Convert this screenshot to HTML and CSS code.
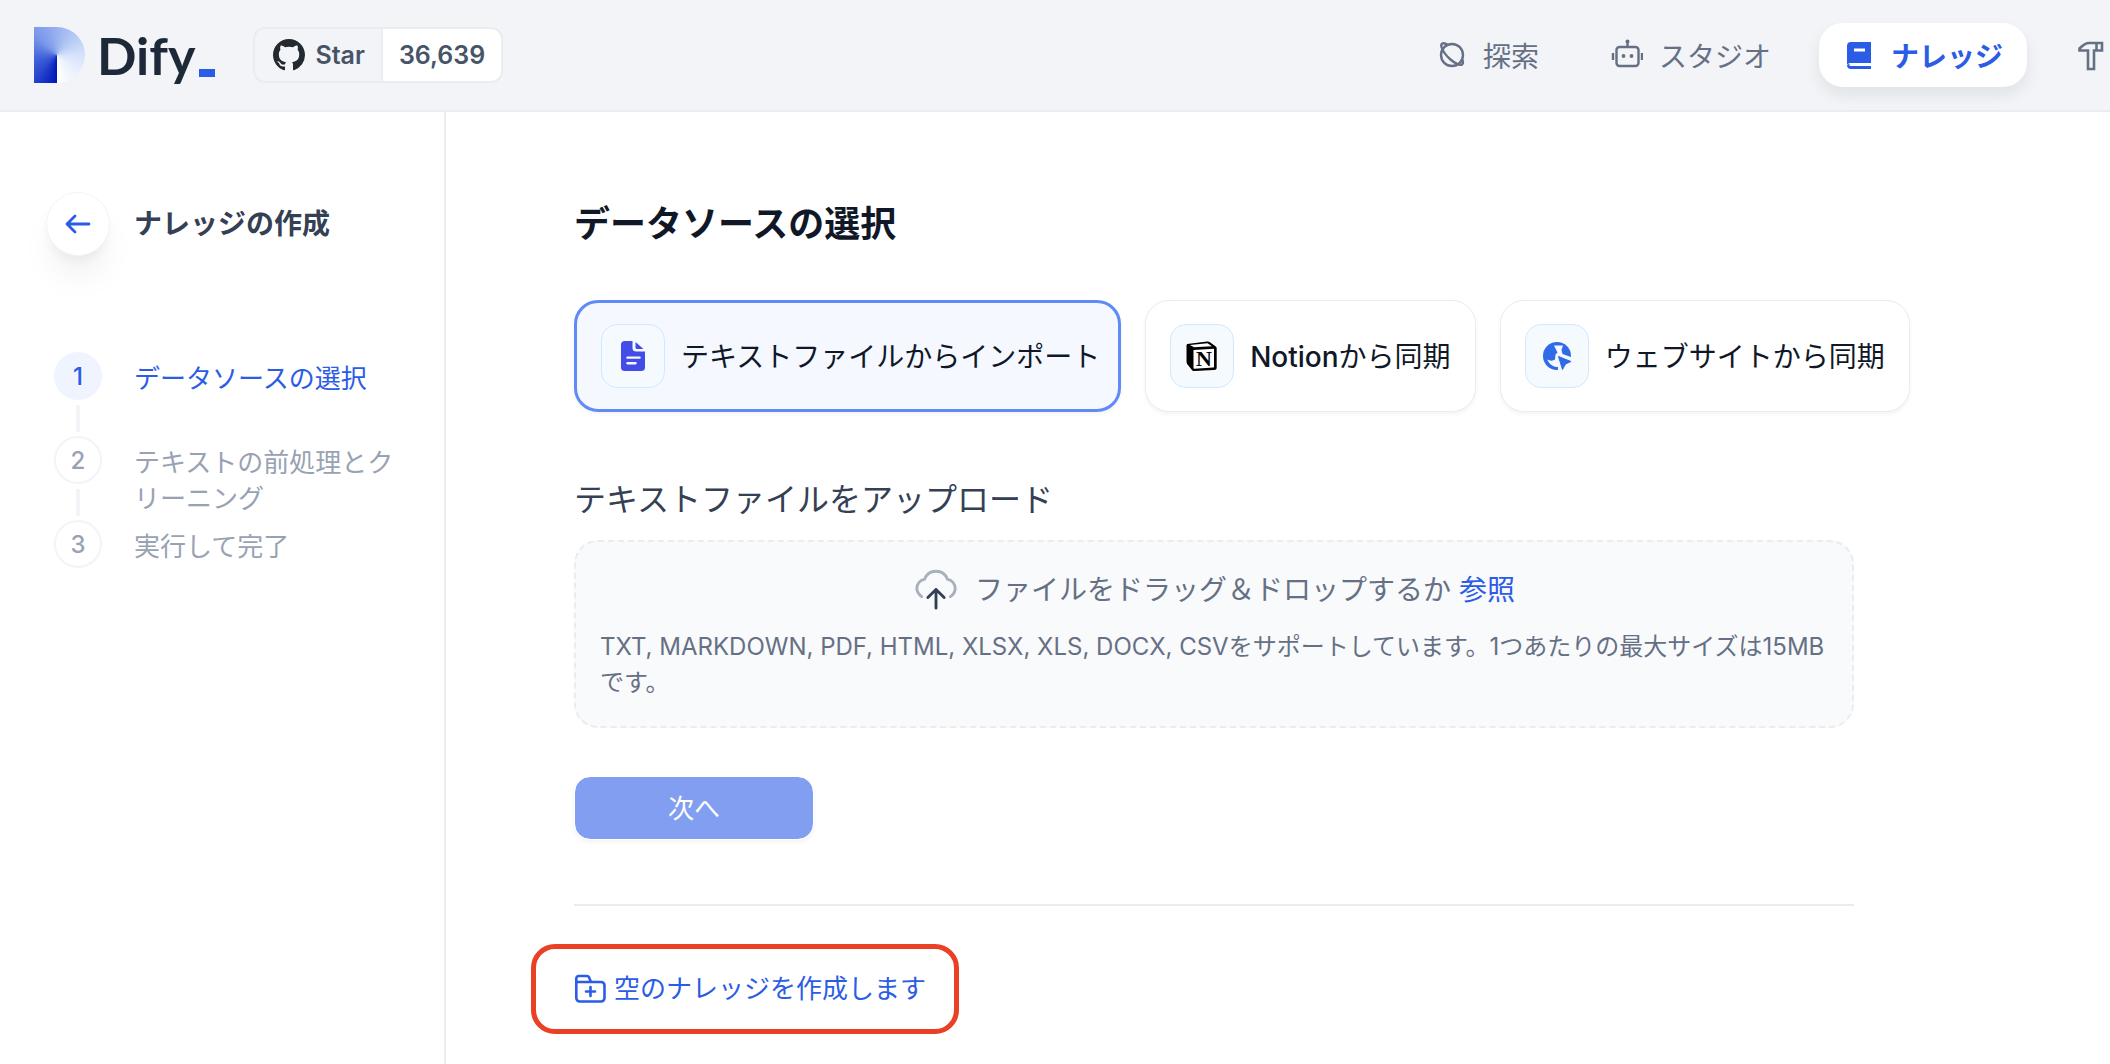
FILE: index.html
```html
<!DOCTYPE html>
<html lang="ja">
<head>
    <meta charset="UTF-8">
    <meta name="viewport" content="width=device-width, initial-scale=1.0">
    <title>ナレッジの作成 - Dify</title>
    <link rel="stylesheet" href="styles.css">
</head>
<body>
    <header class="header">
        <a class="logo" href="#">
            <span class="logo-mark"></span>
            <span class="logo-text">Dify</span>
            <span class="logo-bar"></span>
        </a>
        <a class="github" href="#">
            <span class="github-star">
                <svg width="32" height="32" viewBox="0 0 16 16" fill="#24292f"><path d="M8 0C3.58 0 0 3.58 0 8c0 3.54 2.29 6.53 5.47 7.59.4.07.55-.17.55-.38 0-.19-.01-.82-.01-1.49-2.01.37-2.53-.49-2.69-.94-.09-.23-.48-.94-.82-1.13-.28-.15-.68-.52-.01-.53.63-.01 1.08.58 1.23.82.72 1.21 1.87.87 2.33.66.07-.52.28-.87.51-1.07-1.78-.2-3.64-.89-3.64-3.95 0-.87.31-1.59.82-2.15-.08-.2-.36-1.02.08-2.12 0 0 .67-.21 2.2.82.64-.18 1.32-.27 2-.27s1.36.09 2 .27c1.53-1.04 2.2-.82 2.2-.82.44 1.1.16 1.92.08 2.12.51.56.82 1.27.82 2.15 0 3.07-1.87 3.75-3.65 3.95.29.25.54.73.54 1.48 0 1.07-.01 1.93-.01 2.2 0 .21.15.46.55.38A8.01 8.01 0 0 0 16 8c0-4.42-3.58-8-8-8z"/></svg>
                Star
            </span>
            <span class="github-count">36,639</span>
        </a>
        <nav class="nav">
            <a class="nav-item" href="#">
                <svg width="32" height="32" viewBox="0 0 32 32" fill="none" stroke="currentColor" stroke-width="2.4">
                    <circle cx="17" cy="16" r="11"/>
                    <path d="M13 6C8.5 3 5.5 4 6.500 8c1.300 4 5 9 9 12.500 4 3.500 9.500 6.500 11.500 5 1.500-1.200.8-4-.5-6"/>
                </svg>
                探索
            </a>
            <a class="nav-item" href="#">
                <svg width="32" height="32" viewBox="0 0 32 32" fill="none" stroke="currentColor" stroke-width="2.4">
                    <rect x="5.5" y="8" width="22" height="19" rx="3"/>
                    <path d="M16.5 8V2M2 14v7M31 14v7"/>
                    <circle cx="16.5" cy="2.5" r="2" fill="currentColor" stroke="none"/>
                    <circle cx="12.5" cy="17" r="1.9" fill="currentColor" stroke="none"/>
                    <circle cx="20.5" cy="17" r="1.9" fill="currentColor" stroke="none"/>
                </svg>
                スタジオ
            </a>
            <a class="nav-item active" href="#">
                <svg width="32" height="32" viewBox="0 0 32 32" fill="currentColor">
                    <path fill-rule="evenodd" d="M8 3h20v21H7.5C6.5 24 5.5 24.5 4 25.5V7a4 4 0 0 1 4-4zM11 9.500v3h11v-3z"/>
                    <path d="M4 26c.8-.8 1.800-1 3-1-1 .5-1 2 .5 2H28v3H8c-2.500 0-4-1.500-4-4z"/>
                </svg>
                ナレッジ
            </a>
            <a class="nav-item cut" href="#" aria-label="ツール">
                <svg width="32" height="32" viewBox="0 0 32 32" fill="none" stroke="currentColor" stroke-width="2.6">
                    <path d="M4.500 11.500V9.500C7 7 10 4 14 4h13v7.500h-8V30h-6V11.500zM21.500 4v7.500"/>
                </svg>
            </a>
        </nav>
    </header>

    <div class="page">
        <aside class="sidebar">
            <div class="sidebar-title">
                <button class="back" type="button" aria-label="戻る">
                    <svg width="28" height="28" viewBox="0 0 28 28" fill="none" stroke="currentColor" stroke-width="2.8" stroke-linecap="round" stroke-linejoin="round"><path d="M25 14H3M11 6l-8 8 8 8"/></svg>
                </button>
                <h2>ナレッジの作成</h2>
            </div>
            <ol class="steps">
                <li class="step current">
                    <div class="marker"><span class="number">1</span></div>
                    <span class="label">データソースの選択</span>
                </li>
                <li class="step">
                    <div class="marker"><span class="number">2</span></div>
                    <span class="label">テキストの前処理とクリーニング</span>
                </li>
                <li class="step">
                    <div class="marker"><span class="number">3</span></div>
                    <span class="label">実行して完了</span>
                </li>
            </ol>
        </aside>

        <main class="main">
            <h1>データソースの選択</h1>
            <div class="sources">
                <button class="source selected" type="button">
                    <span class="source-icon">
                        <svg width="32" height="32" viewBox="0 0 32 32" fill="#444ce7">
                            <path fill-rule="evenodd" d="M8 0h7.500v8a4 4 0 0 0 4 4H28v18a4 4 0 0 1-4 4H8a4 4 0 0 1-4-4V4a4 4 0 0 1 4-4zM10.500 17.700a1.300 1.300 0 0 0 0 2.600h12a1.300 1.300 0 0 0 0-2.600zM10.500 24a1.300 1.300 0 0 0 0 2.600h8a1.300 1.300 0 0 0 0-2.600z" transform="translate(0 1) scale(1 .88)"/>
                            <path d="M18.500 2 26.500 9h-6.500a1.500 1.500 0 0 1-1.500-1.500z"/>
                        </svg>
                    </span>
                    <span class="source-name">テキストファイルからインポート</span>
                </button>
                <button class="source" type="button">
                    <span class="source-icon">
                        <svg width="34" height="34" viewBox="0 0 34 34">
                            <path d="M1 4.500 23 1l10 6v25L8 33.500 1 26z" fill="#fff"/>
                            <path d="M2 5 22 2.500c1.500-.2 2 0 3 .7l5.500 4c1 .7 1.200 1 1.200 2.200V28.500c0 1.500-.6 2.300-2.200 2.400L9.500 32c-1.200.1-1.800-.1-2.600-1l-4-5C2 24.800 1.500 24 1.500 22.500V6.500z" fill="#000"/>
                            <path d="M5 6 22.500 4.300l4.500 2.900-18 1.100z" fill="#fff"/>
                            <path d="M8.500 11 29 9.800v17.700c0 .7-.3 1-1 1.100L9.500 29.700c-.7 0-1-.3-1-1z" fill="#fff"/>
                            <text class="notion-n" x="19" y="27" text-anchor="middle">N</text>
                        </svg>
                    </span>
                    <span class="source-name"><b>Notion</b>から同期</span>
                </button>
                <button class="source" type="button">
                    <span class="source-icon">
                        <svg width="32" height="32" viewBox="0 0 32 32">
                            <circle cx="16" cy="16" r="14" fill="#2f6be8"/>
                            <path d="M13 5.500h9l-1.500 4.500 1 4 8.500 3 1 4-3 9-10 1-2-2.500c-3 0-6-2-8-5l-2-4c3 1.500 6 1.500 8 0l.5-5 2-2z" fill="#f5f9ff"/>
                            <path d="M5.500 21c2.500 5 7 7.300 11.500 7.300" fill="none" stroke="#2f6be8" stroke-width="2.5"/>
                            <path d="m17.500 16.500 12.500 5-5.500 2.500-3 5.500z" fill="#2f6be8" stroke="#2f6be8" stroke-linejoin="round"/>
                        </svg>
                    </span>
                    <span class="source-name">ウェブサイトから同期</span>
                </button>
            </div>

            <h3>テキストファイルをアップロード</h3>
            <div class="dropzone">
                <div class="drop-row">
                    <svg width="46" height="46" viewBox="0 0 48 48" fill="none" stroke-width="3" stroke-linecap="round" stroke-linejoin="round">
                        <path d="M9 33C6 30.500 4 28 4 24.500c0-5 3.500-9 8-9.500C14 9.500 18 6.500 24 6.500S34 9.500 36 15c4.500.5 8 4.500 8 9.500 0 3.500-1.500 6-5 8.500" stroke="#a9b0bd"/>
                        <path d="M24 45V25.500M15.500 34l8.500-8.500 8.500 8.500" stroke="#344054"/>
                    </svg>
                    <span>ファイルをドラッグ＆ドロップするか <a href="#">参照</a></span>
                </div>
                <p>TXT, MARKDOWN, PDF, HTML, XLSX, XLS, DOCX, CSVをサポートしています。1つあたりの最大サイズは15MBです。</p>
            </div>

            <button class="next" type="button">次へ</button>

            <hr>

            <div class="highlight">
                <a class="create-empty" href="#">
                    <svg width="32" height="32" viewBox="0 0 32 32" fill="none" stroke="currentColor" stroke-width="2.6" stroke-linecap="round" stroke-linejoin="round">
                        <path d="M2.300 9V5.500a2.500 2.500 0 0 1 2.500-2.500h8a2.500 2.500 0 0 1 2.300 1.400L17 9M2.300 9H27a3.500 3.500 0 0 1 3.500 3.500V25a3.500 3.500 0 0 1-3.500 3.500H5.800A3.500 3.500 0 0 1 2.300 25zM16.500 14v9M12 18.500h9"/>
                    </svg>
                    空のナレッジを作成します
                </a>
            </div>
        </main>
    </div>
</body>
</html>
```

FILE: styles.css
```css
* {
    box-sizing: border-box;
}
body {
    margin: 0;
    min-height: 100vh;
    display: flex;
    flex-direction: column;
    font-family: Inter, "Noto Sans CJK JP", sans-serif;
    color: #101828;
    background-color: white;
    overflow-x: hidden;
}
a {
    color: #2b5ce6;
    text-decoration: none;
}
button {
    font-family: inherit;
    color: inherit;
    cursor: pointer;
}
svg {
    flex: none;
    display: block;
}
h1, h2, h3, p, ol {
    margin: 0;
    padding: 0;
}

/* header */
.header {
    display: flex;
    align-items: center;
    height: 112px;
    padding: 0 3px 0 34px;
    background-color: #f2f4f7;
    border-bottom: 2px solid #eaecf0;
}
.logo {
    display: flex;
    align-items: center;
    color: #1d2939;
}
.logo-mark {
    width: 51px;
    height: 56px;
    border-radius: 0 28px 28px 0;
    background: conic-gradient(from 180deg at 23px 28px, #0015b8, #2a48d0 45deg, #4a6bdc 90deg, #7b98ea 135deg, #98b1f0 180deg, #b5cbf5 225deg, #d5e2fa 270deg, #ecf1fd 315deg, white 360deg);
}
.logo-text {
    margin-left: 12px;
    font-family: Lato, sans-serif;
    font-size: 52px;
    font-weight: 700;
    line-height: 56px;
}
.logo-bar {
    width: 16px;
    height: 8px;
    margin: 36px 0 0 4px;
    background-color: #2b5ce6;
}
.github {
    display: flex;
    height: 56px;
    margin-left: 38px;
    border: 2px solid #eaecf0;
    border-radius: 12px;
    overflow: hidden;
    color: #475467;
    font-size: 25px;
    font-weight: 600;
}
.github-star {
    display: flex;
    align-items: center;
    gap: 10px;
    padding: 0 16px 0 18px;
    border-right: 2px solid #eaecf0;
}
.github-count {
    display: flex;
    align-items: center;
    padding: 0 16px;
    background-color: white;
}
.nav {
    display: flex;
    gap: 24px;
    margin-left: auto;
}
.nav-item {
    display: flex;
    align-items: center;
    gap: 16px;
    height: 64px;
    padding: 0 24px;
    border-radius: 24px;
    color: #667085;
    font-size: 28px;
    white-space: nowrap;
}
.nav-item.active {
    color: #2b5ce6;
    font-weight: 700;
    background-color: white;
    box-shadow: 0 8px 16px rgba(16, 24, 40, 0.08);
}
.nav-item.cut {
    padding-right: 0;
}

/* sidebar */
.page {
    display: flex;
    flex: 1;
}
.sidebar {
    flex: none;
    width: 446px;
    padding: 80px 40px 40px 46px;
    border-right: 2px solid #eaecf0;
}
.sidebar-title {
    display: flex;
    align-items: center;
    gap: 24px;
    margin-bottom: 96px;
}
.sidebar-title h2 {
    color: #344054;
    font-size: 28px;
    line-height: 40px;
}
.back {
    display: flex;
    align-items: center;
    justify-content: center;
    width: 64px;
    height: 64px;
    padding: 0;
    border: 1px solid #f2f4f7;
    border-radius: 50%;
    background-color: white;
    color: #2b5ce6;
    box-shadow: 0 24px 36px -8px rgba(16, 24, 40, 0.08), 0 8px 12px -4px rgba(16, 24, 40, 0.06);
}
.steps {
    list-style: none;
    padding-left: 8px;
}
.step {
    display: flex;
    gap: 32px;
    min-height: 84px;
    color: #98a2b3;
    font-size: 26px;
}
.marker {
    display: flex;
    flex-direction: column;
    align-items: center;
}
.number {
    display: flex;
    align-items: center;
    justify-content: center;
    width: 48px;
    height: 48px;
    border: 2px solid #f2f4f7;
    border-radius: 50%;
    font-size: 24px;
    font-weight: 500;
}
/* line down to the next step */
.step:not(:last-child) .marker::after {
    content: "";
    flex: 1;
    width: 4px;
    margin: 5px 0 4px;
    background-color: #f2f4f7;
}
.label {
    padding-top: 9px;
    line-height: 36px;
}
.current {
    color: #2b5ce6;
}
.current .number {
    background-color: #eff4ff;
    border-color: #eff4ff;
}

/* main */
.main {
    flex: 1;
    min-width: 0;
    max-width: 1536px;
    padding: 84px 128px 28px;
}
.main h1 {
    font-size: 36px;
    line-height: 56px;
}
.sources {
    display: flex;
    gap: 24px;
    margin: 48px 0 60px;
}
.source {
    display: flex;
    align-items: center;
    flex: none;
    gap: 16px;
    height: 112px;
    padding: 0 24px;
    border: 1px solid #eaecf0;
    border-radius: 24px;
    background-color: white;
    font-size: 28px;
    white-space: nowrap;
    box-shadow: 0 2px 4px rgba(16, 24, 40, 0.05);
}
.source.selected {
    padding-right: 18px;
    border: 3px solid #5e8bf7;
    background-color: #f5f8ff;
}
.source-icon {
    display: flex;
    align-items: center;
    justify-content: center;
    width: 64px;
    height: 64px;
    border: 1px solid #d1e9ff;
    border-radius: 16px;
    background-color: #f5faff;
}
.source-name {
    padding-bottom: 3px;
}
.source-name b {
    font-weight: 500;
}
.notion-n {
    font-family: "Liberation Serif", serif;
    font-size: 22px;
    font-weight: 700;
}
.main h3 {
    color: #344054;
    font-size: 32px;
    font-weight: 400;
    line-height: 56px;
}
.dropzone {
    margin-top: 12px;
    padding: 23px 24px;
    border: 2px dashed #eaecf0;
    border-radius: 24px;
    background-color: #f9fafb;
    color: #667085;
}
.drop-row {
    display: flex;
    align-items: center;
    justify-content: center;
    gap: 16px;
    margin-bottom: 18px;
    font-size: 28px;
}
.dropzone p {
    padding-bottom: 2px;
    font-size: 24px;
    line-height: 36px;
}
.next {
    display: block;
    width: 240px;
    height: 64px;
    margin-top: 48px;
    padding: 0 0 4px;
    border: 1px solid white;
    border-radius: 16px;
    background-color: #829ef0;
    background-clip: padding-box;
    color: white;
    font-size: 26px;
    box-shadow: 0 2px 4px rgba(16, 24, 40, 0.05);
}
hr {
    margin: 64px 0 0;
    border: 0;
    border-top: 2px solid #eaecf0;
}
.highlight {
    width: fit-content;
    margin: 38px 0 0 -43px;
    padding: 20px 28px 20px 38px;
    border: 5px solid #ea4025;
    border-radius: 24px;
}
.create-empty {
    display: flex;
    align-items: center;
    gap: 8px;
    font-size: 26px;
    line-height: 40px;
}
```
